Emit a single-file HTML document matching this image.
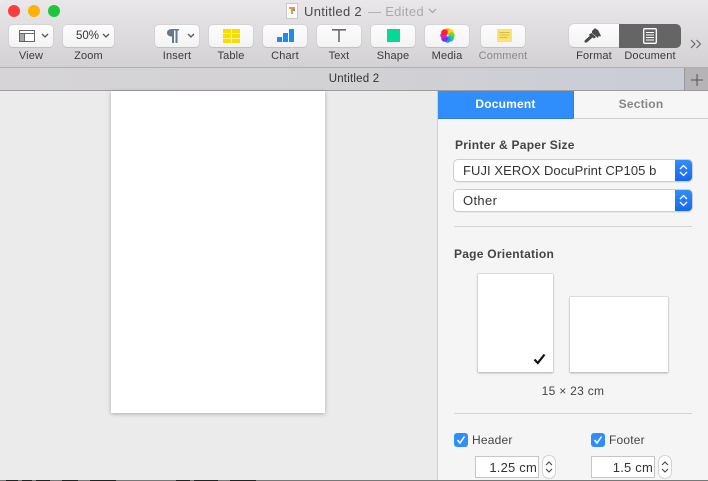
<!DOCTYPE html>
<html>
<head>
<meta charset="utf-8">
<style>
html,body{margin:0;padding:0;width:708px;height:481px;overflow:hidden;background:#ebebeb;font-family:"Liberation Sans",sans-serif;color:#3c3c3c}
div,span,svg{position:absolute;box-sizing:border-box}
.tb{left:0;top:0;width:708px;height:68px;background:linear-gradient(#e9e7e9,#d3d1d3);border-bottom:1px solid #b0aeb0;border-radius:5px 5px 0 0}
.lt{width:12px;height:12px;top:5px;border-radius:50%}
.btn{top:25px;height:22px;background:linear-gradient(#fdfdfd,#f3f3f3);border-radius:4px;box-shadow:0 0 0 .5px #c8c6c8,0 1px 0 #bbb9bb}
.lb{top:49px;height:14px;line-height:14px;font-size:11px;text-align:center;color:#3d3a3a;letter-spacing:.15px;white-space:nowrap}
.sel{left:454px;width:238px;height:21px;background:#fff;border-radius:4px;box-shadow:0 0 0 1px #cdcdcd,0 1px 1px #b5b5b5;font-size:13px;line-height:21px;padding-left:9px;color:#333;letter-spacing:.07px;white-space:nowrap}
.arr{left:675px;width:17px;height:21px;background:linear-gradient(#2f8efc,#1668f0);border-radius:0 4px 4px 0}
.h{font-size:12px;font-weight:bold;color:#444;letter-spacing:.25px;white-space:nowrap;line-height:14px}
.hr{left:454px;width:238px;height:1px;background:#d3d3d3}
.cb{top:434px;width:14px;height:14px;border-radius:3px;background:#2f8efc}
.inp{top:456px;width:64px;height:22px;background:#fff;border:1px solid #c6c6c6;font-size:13px;line-height:21px;text-align:right;padding-right:1px;color:#333;letter-spacing:.2px}
.st{top:456px;width:12px;height:22px;background:#fff;border-radius:5px;box-shadow:0 0 0 .5px #b5b5b5}
</style>
</head>
<body>
<div class="tb"></div>
<div class="lt" style="left:8px;background:#fc3d3a"></div>
<div class="lt" style="left:28px;background:#fdb202"></div>
<div class="lt" style="left:48px;background:#1dc63c"></div>

<svg style="left:286px;top:3px" width="12" height="16" viewBox="0 0 12 16"><rect x=".5" y=".5" width="11" height="15" fill="#fbfbfb" stroke="#c9c9c9"/><path d="M3 4h6v2H7v5H5V6H3z" fill="#e99a3c"/><path d="M7 6h2v2H7z" fill="#5a9ad8"/></svg>
<div style="left:304px;top:3px;font-size:13px;line-height:17px;color:#4a4747;white-space:nowrap;letter-spacing:.3px">Untitled 2</div>
<div style="left:368px;top:3px;font-size:13px;line-height:17px;color:#aaa8a8;white-space:nowrap;letter-spacing:.3px">— Edited</div>
<svg style="left:428px;top:8px" width="9" height="6" viewBox="0 0 9 6"><path d="M1 1l3.500 3.500L8 1" fill="none" stroke="#aaa8a8" stroke-width="1.300"/></svg>

<div class="btn" style="left:9px;width:44px"></div>
<svg style="left:19px;top:30px" width="16" height="12" viewBox="0 0 16 12"><rect x=".5" y=".5" width="15" height="11" fill="#fff" stroke="#666"/><rect x="1" y="4" width="4" height="7" fill="#a8a8a8"/><path d="M1 3.500h14M5.500 4v7" stroke="#666"/></svg>
<svg style="left:41px;top:33px" width="8" height="6" viewBox="0 0 8 6"><path d="M1 1l3 3 3-3" fill="none" stroke="#555" stroke-width="1.300"/></svg>
<div class="lb" style="left:9px;width:44px">View</div>

<div class="btn" style="left:63px;width:51px"></div>
<div style="left:76px;top:28px;font-size:11.500px;line-height:16px;color:#333">50%</div>
<svg style="left:102px;top:33px" width="8" height="6" viewBox="0 0 8 6"><path d="M1 1l3 3 3-3" fill="none" stroke="#555" stroke-width="1.300"/></svg>
<div class="lb" style="left:63px;width:51px">Zoom</div>

<div class="btn" style="left:155px;width:44px"></div>
<svg style="left:167px;top:29px" width="12" height="14" viewBox="0 0 12 14"><path d="M5 0h7v1.500h-1.500V14H8.500V1.500H7V14H5V7.500C2 7.500 0 6 0 3.700 0 1.400 2 0 5 0z" fill="#65788c"/></svg>
<svg style="left:187px;top:33px" width="8" height="6" viewBox="0 0 8 6"><path d="M1 1l3 3 3-3" fill="none" stroke="#555" stroke-width="1.300"/></svg>
<div class="lb" style="left:155px;width:44px">Insert</div>

<div class="btn" style="left:209px;width:44px"></div>
<svg style="left:223px;top:29px" width="17" height="14" viewBox="0 0 17 14"><rect width="17" height="14" fill="#fbdc00"/><path d="M0 4.500h17M0 9.500h17M8.500 0v14" stroke="#fff59a" stroke-width="1"/></svg>
<div class="lb" style="left:209px;width:44px">Table</div>

<div class="btn" style="left:263px;width:44px"></div>
<svg style="left:277px;top:29px" width="17" height="13" viewBox="0 0 17 13"><rect x="0" y="8" width="5" height="5" fill="#1a8df0"/><rect x="6" y="4" width="5" height="9" fill="#1a8df0"/><rect x="12" y="0" width="5" height="13" fill="#1a8df0"/></svg>
<div class="lb" style="left:263px;width:44px">Chart</div>

<div class="btn" style="left:317px;width:44px"></div>
<svg style="left:332px;top:29px" width="14" height="13" viewBox="0 0 14 13"><path d="M0 .8h14M7 .8V13" stroke="#6a6a6a" stroke-width="1.600" fill="none"/></svg>
<div class="lb" style="left:317px;width:44px">Text</div>

<div class="btn" style="left:371px;width:44px"></div>
<div style="left:387px;top:29px;width:13px;height:13px;background:#06d89a"></div>
<div class="lb" style="left:371px;width:44px">Shape</div>

<div class="btn" style="left:425px;width:44px"></div>
<svg style="left:440px;top:28px" width="15" height="15" viewBox="0 0 30 30">
<rect x="2" y="2" width="26" height="26" rx="10" fill="#8a6ae0" opacity="0"/>
<circle cx="15" cy="7" r="6.500" fill="#ff9a00"/><circle cx="21" cy="9" r="6.500" fill="#ffd400"/><circle cx="23" cy="15" r="6.500" fill="#7ed321"/><circle cx="21" cy="21" r="6.500" fill="#1dc8a0"/><circle cx="15" cy="23" r="6.500" fill="#1e8cf5"/><circle cx="9" cy="21" r="6.500" fill="#6a35f0"/><circle cx="7" cy="15" r="6.500" fill="#d020e0"/><circle cx="9" cy="9" r="6.500" fill="#ff2030"/><circle cx="15" cy="15" r="1.500" fill="#fff"/></svg>
<div class="lb" style="left:425px;width:44px">Media</div>

<div class="btn" style="left:481px;width:44px"></div>
<svg style="left:497px;top:29px" width="15" height="13" viewBox="0 0 15 13"><rect width="15" height="13" fill="#fbe46e"/><path d="M2.500 3.500h10M2.500 6h10M2.500 8.500h8" stroke="#c9ad3a" stroke-width=".8"/></svg>
<div class="lb" style="left:478px;width:50px;color:#8a8888">Comment</div>

<div class="btn" style="left:569px;width:51px;top:24px;height:23px;border-radius:5px 0 0 5px"></div>
<div style="left:619px;top:24px;width:62px;height:24px;background:#656565;border-radius:0 5px 5px 0"></div>
<svg style="left:584px;top:28px" width="17" height="15" viewBox="0 0 17 15"><path d="M8 3l3-3 1 1 2 1 1 2 2 4-1 .5-1.500-.5-.5 2-6-5zM7.500 5l4.500 4-2 1.500-1.500-1-4.500 4c-1 1.200-2.500 1.500-3.300.7-.7-.9 0-1.800 1-2.700l4-3.500-.7-1.500z" fill="#4a4a4a"/></svg>
<svg style="left:643px;top:28px" width="14" height="16" viewBox="0 0 14 16"><rect x=".7" y=".7" width="12.600" height="14.600" rx="1" fill="none" stroke="#fff" stroke-width="1.300"/><path d="M3 4.500h8M3 7h8M3 9.500h8M3 12h8" stroke="#fff"/></svg>
<div class="lb" style="left:569px;width:50px">Format</div>
<div class="lb" style="left:619px;width:62px">Document</div>
<svg style="left:690px;top:39px" width="12" height="10" viewBox="0 0 12 10"><path d="M1 1l4 4-4 4M6.500 1l4 4-4 4" fill="none" stroke="#666" stroke-width="1.100"/></svg>

<div style="left:0;top:68px;width:708px;height:23px;background:linear-gradient(90deg,#d6d4d6,#d2d1d4 50%,#c9ccd6);border-bottom:1px solid #9e9c9e"></div>
<div style="left:684px;top:68px;width:24px;height:22px;background:#b5b3b5;border-left:1px solid #999"></div>
<svg style="left:691px;top:74px" width="12" height="12" viewBox="0 0 12 12"><path d="M6 0v12M0 6h12" stroke="#555" stroke-width="1"/></svg>
<div style="left:0;top:72px;width:708px;text-align:center;font-size:11.500px;line-height:15px;color:#333;letter-spacing:.2px">Untitled 2</div>

<div style="left:111px;top:91px;width:214px;height:322px;background:#fff;box-shadow:0 1px 4px rgba(0,0,0,.28)"></div>

<div style="left:437px;top:91px;width:271px;height:390px;background:#f5f5f5;border-left:1px solid #d0d0d0"></div>
<div style="left:438px;top:91px;width:135px;height:28px;background:#2f8efc;border-bottom:1px solid #2a7fe0;color:#fff;font-size:12px;font-weight:bold;line-height:27px;text-align:center;letter-spacing:.2px">Document</div>
<div style="left:573px;top:91px;width:135px;height:28px;background:#f6f6f6;border-bottom:1px solid #cfcfcf;border-left:1px solid #2a7fe0;color:#858585;font-size:12px;font-weight:bold;line-height:27px;text-align:center;letter-spacing:.2px">Section</div>

<div class="h" style="left:455px;top:138px">Printer &amp; Paper Size</div>
<div class="sel" style="top:160px">FUJI XEROX DocuPrint CP105 b</div>
<div class="arr" style="top:160px"></div>
<svg style="left:679px;top:164px" width="9" height="13" viewBox="0 0 9 13"><path d="M1 5l3.500-3.500L8 5M1 8l3.500 3.500L8 8" fill="none" stroke="#fff" stroke-width="1.300"/></svg>
<div class="sel" style="top:190px;letter-spacing:.35px">Other</div>
<div class="arr" style="top:190px"></div>
<svg style="left:679px;top:194px" width="9" height="13" viewBox="0 0 9 13"><path d="M1 5l3.500-3.500L8 5M1 8l3.500 3.500L8 8" fill="none" stroke="#fff" stroke-width="1.300"/></svg>
<div class="hr" style="top:226px"></div>

<div class="h" style="left:454px;top:247px">Page Orientation</div>
<div style="left:478px;top:274px;width:75px;height:98px;background:#fff;box-shadow:0 0 0 .5px #c8c8c8,0 1px 2px rgba(0,0,0,.35)"></div>
<svg style="left:533px;top:353px" width="13" height="12" viewBox="0 0 13 12"><path d="M1.500 6.500L4.800 10 11.500 1.500" fill="none" stroke="#111" stroke-width="2.200"/></svg>
<div style="left:570px;top:297px;width:98px;height:75px;background:#fff;box-shadow:0 0 0 .5px #c8c8c8,0 1px 2px rgba(0,0,0,.35)"></div>
<div style="left:438px;top:384px;width:270px;text-align:center;font-size:12px;line-height:14px;color:#444;letter-spacing:.3px">15 × 23 cm</div>
<div class="hr" style="top:413px"></div>

<div class="cb" style="left:454px;top:433px"></div>
<svg style="left:456px;top:435px" width="10" height="10" viewBox="0 0 10 10"><path d="M1.500 5l2.500 3L8.500 1.500" fill="none" stroke="#fff" stroke-width="1.500"/></svg>
<div style="left:472px;top:433px;font-size:12px;line-height:15px;color:#444;letter-spacing:.2px">Header</div>
<div class="cb" style="left:591px;top:433px"></div>
<svg style="left:593px;top:435px" width="10" height="10" viewBox="0 0 10 10"><path d="M1.500 5l2.500 3L8.500 1.500" fill="none" stroke="#fff" stroke-width="1.500"/></svg>
<div style="left:609px;top:433px;font-size:12px;line-height:15px;color:#444;letter-spacing:.2px">Footer</div>

<div class="inp" style="left:475px">1.25 cm</div>
<div class="st" style="left:543px"></div>
<svg style="left:545px;top:459px" width="8" height="16" viewBox="0 0 8 16"><path d="M1 6l3-3 3 3M1 10l3 3 3-3" fill="none" stroke="#444" stroke-width="1.100"/></svg>
<div class="inp" style="left:591px">1.5 cm</div>
<div class="st" style="left:659px"></div>
<svg style="left:661px;top:459px" width="8" height="16" viewBox="0 0 8 16"><path d="M1 6l3-3 3 3M1 10l3 3 3-3" fill="none" stroke="#444" stroke-width="1.100"/></svg>

<div style="left:0;top:480px;width:708px;height:1px;background:#777"></div>
<svg style="left:0;top:480px" width="260" height="1"><path d="M6 .5h12M22 .5h10M36 .5h14M62 .5h16M90 .5h26M176 .5h14M194 .5h24M230 .5h26" stroke="#222" stroke-width="1"/></svg>
</body>
</html>
